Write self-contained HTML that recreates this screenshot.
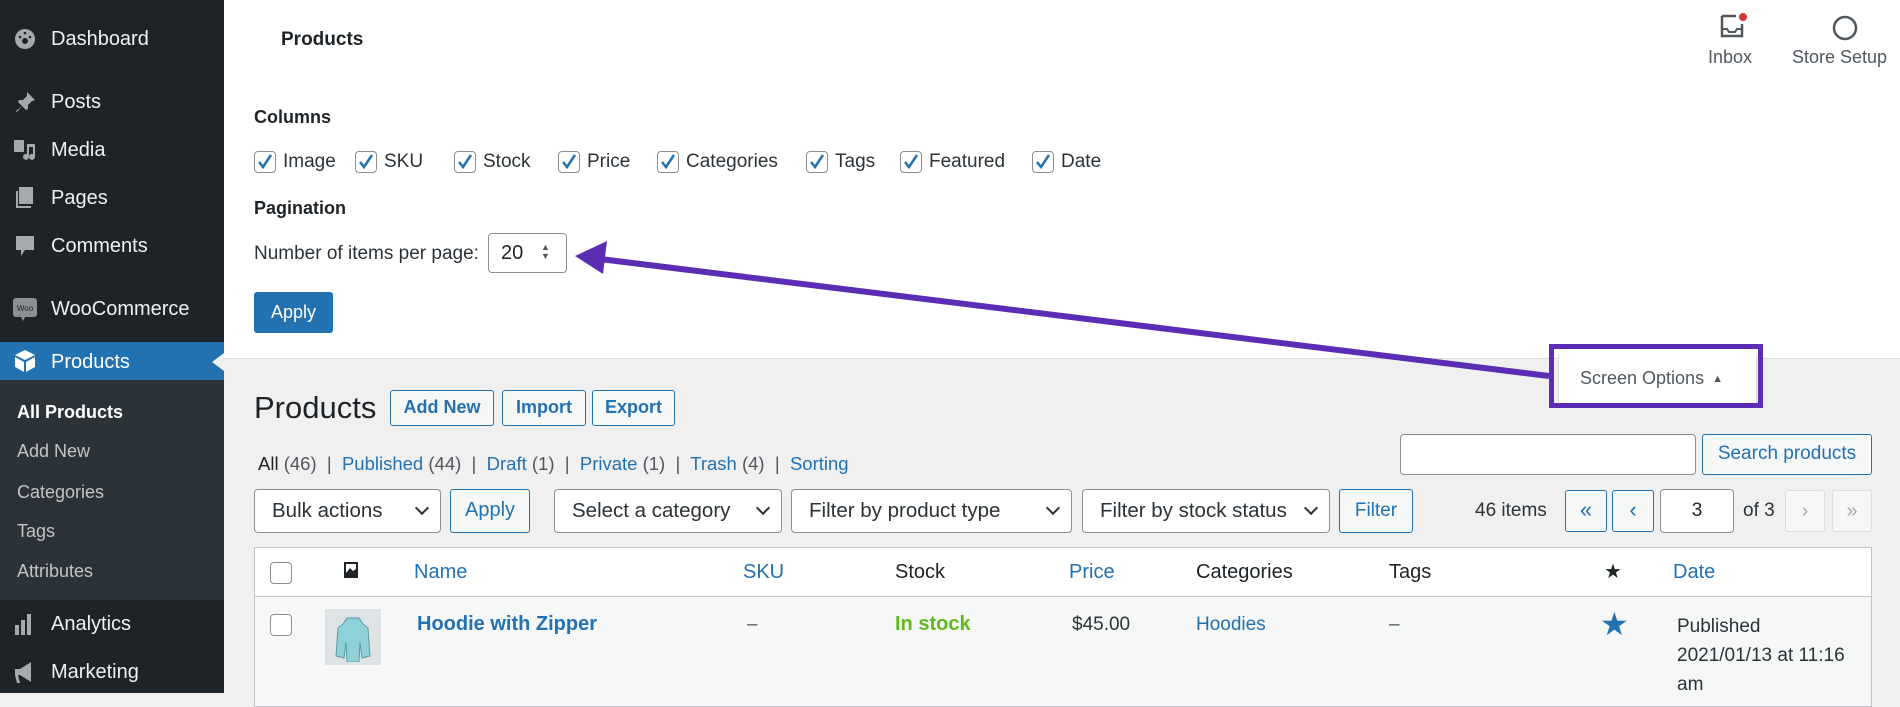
<!DOCTYPE html>
<html><head><meta charset="utf-8"><style>
*{box-sizing:border-box;margin:0;padding:0}
body{width:1900px;height:693px;overflow:hidden;background:#f0f0f1;font-family:"Liberation Sans",Arial,sans-serif;color:#1d2327;position:relative;font-size:19px}
.a{position:absolute;white-space:nowrap}
#side{position:absolute;left:0;top:0;width:224px;height:693px;background:#1d2327}
.mi{position:absolute;left:51px;color:#f0f0f1;font-size:20px;line-height:24px}
.ic{position:absolute;left:13px;width:24px;height:24px}
.sub{position:absolute;left:0;top:380px;width:224px;height:220px;background:#2c3338}
.si{position:absolute;left:17px;color:#c3c4c7;font-size:18px;line-height:22px}
.blue{color:#2271b1}
.cb{position:absolute;width:22px;height:22px;border:1.5px solid #8c8f94;border-radius:4px;background:#fff}
.cb svg{position:absolute;left:2px;top:1px}
.btn{position:absolute;border:1.5px solid #2271b1;color:#2271b1;background:#f6f7f7;border-radius:3px;font-size:19px;text-align:center}
.sel{position:absolute;border:1.5px solid #8c8f94;background:#fff;border-radius:4px;font-size:20.5px;line-height:41px;padding-left:17px;color:#2c3338}
.sel:after{content:"";position:absolute;right:13px;top:13px;width:8px;height:8px;border-right:2px solid #2c3338;border-bottom:2px solid #2c3338;transform:rotate(45deg)}
.t{font-size:20px}
</style></head><body>
<div class="a" style="left:224px;top:0;width:1676px;height:359px;background:#fff;border-bottom:1px solid #dcdcde"></div>
<div id="side">
 <svg class="ic" style="top:27px" viewBox="0 0 24 24"><circle cx="12" cy="12" r="10" fill="#a7aaad"/><circle cx="12" cy="14" r="3" fill="#1d2327"/><circle cx="7" cy="10" r="1.3" fill="#1d2327"/><circle cx="12" cy="6" r="1.3" fill="#1d2327"/><circle cx="17" cy="10" r="1.3" fill="#1d2327"/></svg>
 <div class="mi" style="top:27px">Dashboard</div>
 <svg class="ic" style="top:90px" viewBox="0 0 24 24"><path d="M14 2l8 8-3 1-4 4 0 4-2 1-4-4-5 6-1-1 6-5-4-4 1-2h4l4-4z" fill="#a7aaad"/></svg>
 <div class="mi" style="top:90px">Posts</div>
 <svg class="ic" style="top:138px" viewBox="0 0 24 24"><rect x="1" y="2" width="10" height="12" rx="1" fill="#a7aaad"/><path d="M14 6h8v13a3 3 0 1 1-2-3V9h-4v10a3 3 0 1 1-2-3z" fill="#a7aaad"/></svg>
 <div class="mi" style="top:138px">Media</div>
 <svg class="ic" style="top:186px" viewBox="0 0 24 24"><rect x="6" y="1" width="14" height="17" fill="#a7aaad"/><path d="M3 5h2v15h13v2H3z" fill="#a7aaad"/></svg>
 <div class="mi" style="top:186px">Pages</div>
 <svg class="ic" style="top:234px" viewBox="0 0 24 24"><path d="M3 2h18v14H12l-4 6v-6H3z" fill="#a7aaad"/></svg>
 <div class="mi" style="top:234px">Comments</div>
 <svg class="ic" style="top:297px" viewBox="0 0 24 24"><rect x="0" y="1" width="24" height="19" rx="3" fill="#8c8f94"/><path d="M8 20l2 4 2-4z" fill="#8c8f94"/><text x="12" y="14" font-size="8" text-anchor="middle" fill="#1d2327" font-family="Liberation Sans">Woo</text></svg>
 <div class="mi" style="top:297px">WooCommerce</div>
 <div class="a" style="left:0;top:342px;width:224px;height:40px;background:#2271b1"></div>
 <div class="a" style="left:212px;top:353px;width:0;height:0;border-top:9px solid transparent;border-bottom:9px solid transparent;border-right:12px solid #f0f0f1"></div>
 <svg class="ic" style="top:349px" viewBox="0 0 24 24"><path d="M12 1l10 5-10 5L2 6z M2 8l9 5v10l-9-5z M22 8l-9 5v10l9-5z" fill="#fff"/></svg>
 <div class="mi" style="top:350px;color:#fff">Products</div>
 <div class="sub">
  <div class="si" style="top:21px;color:#fff;font-weight:bold">All Products</div>
  <div class="si" style="top:60px">Add New</div>
  <div class="si" style="top:101px">Categories</div>
  <div class="si" style="top:140px">Tags</div>
  <div class="si" style="top:180px">Attributes</div>
 </div>
 <svg class="ic" style="top:612px" viewBox="0 0 24 24"><rect x="2" y="13" width="4" height="10" fill="#a7aaad"/><rect x="8" y="8" width="4" height="15" fill="#a7aaad"/><rect x="14" y="2" width="4" height="21" fill="#a7aaad"/></svg>
 <div class="mi" style="top:612px">Analytics</div>
 <svg class="ic" style="top:660px" viewBox="0 0 24 24"><path d="M2 9h5l11-7v20L7 15H5l2 8H4L2 15z" fill="#a7aaad"/></svg>
 <div class="mi" style="top:660px">Marketing</div>
</div>

<div class="a" style="left:281px;top:29px;font-size:19px;font-weight:bold">Products</div>
<svg class="a" style="left:1718px;top:12px" width="30" height="26" viewBox="0 0 30 26"><path d="M4 4h14M4 4v20h20v-12" fill="none" stroke="#50575e" stroke-width="2.5"/><path d="M4 17h5l2 3h6l2-3h5" fill="none" stroke="#50575e" stroke-width="2"/><circle cx="25" cy="5" r="4" fill="#d63638"/></svg>
<div class="a" style="left:1708px;top:47px;font-size:18px;color:#50575e">Inbox</div>
<svg class="a" style="left:1831px;top:14px" width="28" height="28"><circle cx="14" cy="14" r="11" fill="none" stroke="#50575e" stroke-width="2.5"/></svg>
<div class="a" style="left:1792px;top:47px;font-size:18px;color:#50575e">Store Setup</div>

<div class="a" style="left:254px;top:107px;font-size:18px;font-weight:bold;color:#1d2327">Columns</div>
<div id="cols"></div>
<div class="a" style="left:254px;top:198px;font-size:18px;font-weight:bold">Pagination</div>
<div class="a" style="left:254px;top:243px;color:#2c3338">Number of items per page:</div>
<div class="a" style="left:488px;top:233px;width:79px;height:40px;border:1.5px solid #8c8f94;border-radius:4px;background:#fff;font-size:20px;padding:8px 0 0 12px">20</div>
<div class="a" style="left:541px;top:243px;font-size:9px;line-height:9px;color:#50575e">&#9650;<br>&#9660;</div>
<div class="a" style="left:254px;top:292px;width:79px;height:41px;background:#2271b1;border-radius:3px;color:#fff;font-size:18px;text-align:center;line-height:41px">Apply</div>

<div class="a" style="left:1558px;top:354px;width:199px;height:50px;background:#fff;border:1px solid #dcdcde;border-top:none"></div>
<div class="a" style="left:1580px;top:368px;font-size:18px;color:#50575e">Screen Options <span style="font-size:11px;position:relative;top:-2px">&nbsp;&#9650;</span></div>
<div class="a" style="left:1549px;top:344px;width:214px;height:64px;border:5px solid #5b2db5"></div>
<svg class="a" style="left:0;top:0" width="1900" height="693"><line x1="1549" y1="376" x2="600" y2="259" stroke="#5b2db5" stroke-width="6"/><path d="M575 256l32-15-4 33z" fill="#5b2db5"/></svg>

<div class="a" style="left:254px;top:390px;font-size:31px;color:#1d2327">Products</div>
<div class="btn" style="left:390px;top:390px;width:104px;height:36px;line-height:33px;font-weight:bold;font-size:18px">Add New</div>
<div class="btn" style="left:502px;top:390px;width:84px;height:36px;line-height:33px;font-weight:bold;font-size:18px">Import</div>
<div class="btn" style="left:592px;top:390px;width:83px;height:36px;line-height:33px;font-weight:bold;font-size:18px">Export</div>
<div class="a" style="left:258px;top:453px;color:#50575e;font-size:18.5px"><b style="color:#1d2327;font-weight:normal">All</b> (46) &nbsp;|&nbsp; <span class="blue">Published</span> (44) &nbsp;|&nbsp; <span class="blue">Draft</span> (1) &nbsp;|&nbsp; <span class="blue">Private</span> (1) &nbsp;|&nbsp; <span class="blue">Trash</span> (4) &nbsp;|&nbsp; <span class="blue">Sorting</span></div>
<div class="a" style="left:1400px;top:434px;width:296px;height:41px;border:1.5px solid #8c8f94;border-radius:4px;background:#fff"></div>
<div class="btn" style="left:1702px;top:434px;width:170px;height:41px;line-height:38px">Search products</div>

<div class="sel" style="left:254px;top:489px;width:187px;height:44px">Bulk actions</div>
<div class="btn" style="left:450px;top:489px;width:80px;height:44px;line-height:41px;font-size:20px">Apply</div>
<div class="sel" style="left:554px;top:489px;width:228px;height:44px">Select a category</div>
<div class="sel" style="left:791px;top:489px;width:281px;height:44px">Filter by product type</div>
<div class="sel" style="left:1082px;top:489px;width:248px;height:44px">Filter by stock status</div>
<div class="btn" style="left:1339px;top:489px;width:74px;height:44px;line-height:41px">Filter</div>
<div class="a" style="left:1475px;top:500px;color:#2c3338">46 items</div>
<div class="btn" style="left:1565px;top:490px;width:42px;height:42px;line-height:38px;font-size:22px">&laquo;</div>
<div class="btn" style="left:1612px;top:490px;width:42px;height:42px;line-height:38px;font-size:22px">&lsaquo;</div>
<div class="a" style="left:1660px;top:489px;width:74px;height:44px;border:1.5px solid #8c8f94;border-radius:4px;background:#fff;font-size:19px;text-align:center;line-height:41px">3</div>
<div class="a" style="left:1743px;top:500px;color:#2c3338">of 3</div>
<div class="a" style="left:1785px;top:490px;width:40px;height:42px;border:1px solid #dcdcde;border-radius:3px;background:#f6f7f7;color:#a7aaad;text-align:center;line-height:40px;font-size:20px">&rsaquo;</div>
<div class="a" style="left:1832px;top:490px;width:40px;height:42px;border:1px solid #dcdcde;border-radius:3px;background:#f6f7f7;color:#a7aaad;text-align:center;line-height:40px;font-size:20px">&raquo;</div>

<div class="a" style="left:254px;top:547px;width:1618px;height:160px;border:1px solid #c3c4c7;background:#f6f7f7"></div>
<div class="a" style="left:255px;top:548px;width:1616px;height:49px;background:#fff;border-bottom:1px solid #c3c4c7"></div>
<div class="cb" style="left:270px;top:562px"></div>
<svg class="a" style="left:343px;top:561px" width="16" height="18"><rect x="1" y="1" width="14" height="16" fill="#1d2327"/><rect x="3" y="3" width="10" height="9" fill="#fff"/><path d="M3 12l4-5 3 3 3-2v4z" fill="#1d2327"/></svg>
<div class="a blue t" style="left:414px;top:561px">Name</div>
<div class="a blue t" style="left:743px;top:561px">SKU</div>
<div class="a t" style="left:895px;top:561px">Stock</div>
<div class="a blue t" style="left:1069px;top:561px">Price</div>
<div class="a t" style="left:1196px;top:561px">Categories</div>
<div class="a t" style="left:1389px;top:561px">Tags</div>
<div class="a" style="left:1604px;top:559px;font-size:20px">&#9733;</div>
<div class="a blue t" style="left:1673px;top:561px">Date</div>

<div class="cb" style="left:270px;top:614px"></div>
<div class="a" style="left:325px;top:609px;width:56px;height:56px;background:#dfe3e6"></div>
<svg class="a" style="left:334px;top:614px" width="38" height="48" viewBox="0 0 38 48"><path d="M13 4h12l4 6 5 4 2 28-8 2-2-16-1 20H13l-1-20-2 16-8-2 2-28 5-4z" fill="#8fd1d8" stroke="#5a9aa5" stroke-width="1"/></svg>
<div class="a blue t" style="left:417px;top:613px;font-weight:bold">Hoodie with Zipper</div>
<div class="a" style="left:747px;top:614px;color:#50575e">–</div>
<div class="a t" style="left:895px;top:613px;color:#5fba1e;font-weight:bold">In stock</div>
<div class="a" style="left:1072px;top:614px;color:#2c3338">$45.00</div>
<div class="a blue" style="left:1196px;top:614px">Hoodies</div>
<div class="a" style="left:1389px;top:614px;color:#50575e">–</div>
<div class="a" style="left:1600px;top:605px;font-size:32px;color:#2271b1">&#9733;</div>
<div class="a" style="left:1677px;top:612px;line-height:29px;color:#2c3338">Published<br>2021/01/13 at 11:16<br>am</div>

<script>
var items=[["Image",265],["SKU",366],["Stock",465],["Price",569],["Categories",668],["Tags",817],["Featured",911],["Date",1043]];
var h="";items.forEach(function(i){h+='<div class="cb" style="left:'+(i[1]-11)+'px;top:151px"><svg width="16" height="17" viewBox="0 0 16 17"><path d="M2 9l4 5 8-12" fill="none" stroke="#2271b1" stroke-width="2.5"/></svg></div><div class="a" style="left:'+(i[1]+18)+'px;top:151px;color:#2c3338">'+i[0]+'</div>';});
document.getElementById("cols").innerHTML=h;
</script>
</body></html>
